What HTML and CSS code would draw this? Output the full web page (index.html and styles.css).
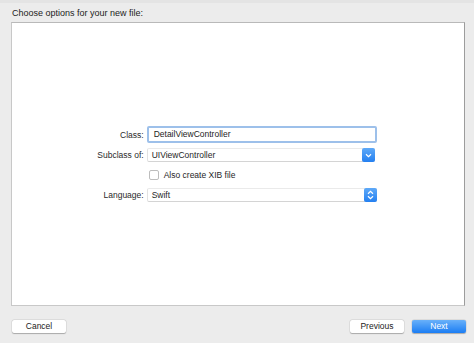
FILE: index.html
```html
<!DOCTYPE html>
<html lang="en">
<head>
<meta charset="UTF-8">
<title>Choose options</title>
<link rel="stylesheet" href="styles.css">
</head>
<body>
    <div class="sheet">
        <div class="title">Choose options for your new file:</div>

        <div class="panel">
            <div class="form">
                <label class="lbl">Class:</label>
                <div class="text-field">DetailViewController</div>

                <label class="lbl">Subclass of:</label>
                <div class="popup">
                    <span>UIViewController</span>
                    <span class="arrow">
                        <svg width="7" height="5" viewBox="0 0 7 5"><path d="M1 1.2 L3.5 3.6 L6 1.2" fill="none" stroke="#fff" stroke-width="1.2"/></svg>
                    </span>
                </div>

                <span></span>
                <div class="check-row">
                    <span class="checkbox"></span>
                    <span>Also create XIB file</span>
                </div>

                <label class="lbl">Language:</label>
                <div class="popup lang">
                    <span>Swift</span>
                    <span class="arrow">
                        <svg width="7" height="10" viewBox="0 0 7 10"><path d="M1 3.8 L3.5 1.4 L6 3.8 M1 6.2 L3.5 8.6 L6 6.2" fill="none" stroke="#fff" stroke-width="1.2"/></svg>
                    </span>
                </div>
            </div>
        </div>

        <div class="footer">
            <button class="btn">Cancel</button>
            <div class="spacer"></div>
            <button class="btn">Previous</button>
            <button class="btn primary">Next</button>
        </div>
    </div>
</body>
</html>
```
FILE: styles.css
```css
body {
    margin: 0;
    background-color: #ececec;
    font-family: "Liberation Sans", Arial, sans-serif;
    color: #262626;
}
.sheet {
    height: 343px;
    border-top: 3px solid #e4e4e4;
    box-sizing: border-box;
}
.title {
    padding: 5px 12px 0;
    height: 14px;
    line-height: 11px;
    font-size: 9px;
    color: #222;
}
.panel {
    margin: 0 9px 0 11px;
    height: 282px;
    background-color: white;
    border: 1px solid #c8c8c8;
    border-top-color: #b9b9b9;
    border-right-color: #9c9c9c;
    display: flex;
    align-items: center;
    justify-content: center;
}
.form {
    display: grid;
    grid-template-columns: auto 230px;
    column-gap: 3px;
    row-gap: 5px;
    align-items: center;
    margin-right: 2px;
    font-size: 8.5px;
}
.lbl {
    text-align: right;
    color: #2a2a2a;
}
.text-field {
    height: 13px;
    line-height: 13px;
    padding: 0 5px;
    border: 2px solid #9dc0ea;
    border-radius: 2px;
    color: #1d1d1d;
}
.popup {
    height: 14px;
    margin-right: 2px;
    display: flex;
    align-items: center;
    justify-content: space-between;
    padding-left: 4px;
    border: 1px solid #e2e2e2;
    border-top-color: #eaeaea;
    border-bottom-color: #d4d4d4;
    border-radius: 2px;
    box-sizing: border-box;
}
.popup.lang {
    margin-right: 0;
}
.arrow {
    width: 13px;
    height: 14px;
    margin-right: -1px;
    border-radius: 2px;
    background: linear-gradient(#5ea9f8, #2480f1);
    display: flex;
    align-items: center;
    justify-content: center;
}
.check-row {
    display: flex;
    align-items: center;
    gap: 5px;
    height: 14px;
    padding-left: 2px;
    margin: 1px 0;
}
.checkbox {
    width: 8px;
    height: 8px;
    border: 1px solid #bdbdbd;
    border-radius: 2px;
    background-color: white;
}
.footer {
    display: flex;
    gap: 8px;
    padding: 14px 8px 0 12px;
}
.spacer {
    flex: 1;
}
button {
    font-family: inherit;
    cursor: pointer;
}
.btn {
    width: 54px;
    height: 13px;
    padding: 0;
    font-size: 8.5px;
    line-height: 13px;
    color: #222;
    background-color: white;
    border: none;
    border-radius: 2px;
    box-shadow: 0 0.5px 1px rgba(0,0,0,0.25), 0 0 0 0.5px rgba(0,0,0,0.08);
}
.btn.primary {
    color: white;
    background: linear-gradient(#69b1fa, #1b7df3);
}
```
